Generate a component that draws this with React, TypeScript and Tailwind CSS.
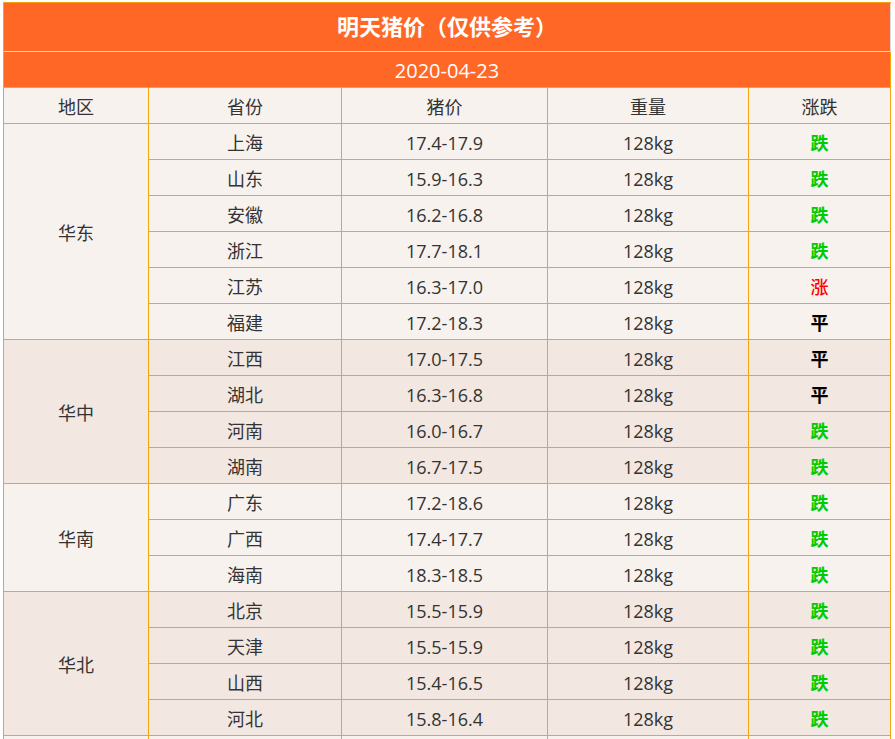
import React from "react";

type Row = { p: string; price: string; t: "跌" | "涨" | "平" };
type Group = { region: string; dark: boolean; rows: Row[] };

const groups: Group[] = [
  {
    region: "华东",
    dark: false,
    rows: [
      { p: "上海", price: "17.4-17.9", t: "跌" },
      { p: "山东", price: "15.9-16.3", t: "跌" },
      { p: "安徽", price: "16.2-16.8", t: "跌" },
      { p: "浙江", price: "17.7-18.1", t: "跌" },
      { p: "江苏", price: "16.3-17.0", t: "涨" },
      { p: "福建", price: "17.2-18.3", t: "平" },
    ],
  },
  {
    region: "华中",
    dark: true,
    rows: [
      { p: "江西", price: "17.0-17.5", t: "平" },
      { p: "湖北", price: "16.3-16.8", t: "平" },
      { p: "河南", price: "16.0-16.7", t: "跌" },
      { p: "湖南", price: "16.7-17.5", t: "跌" },
    ],
  },
  {
    region: "华南",
    dark: false,
    rows: [
      { p: "广东", price: "17.2-18.6", t: "跌" },
      { p: "广西", price: "17.4-17.7", t: "跌" },
      { p: "海南", price: "18.3-18.5", t: "跌" },
    ],
  },
  {
    region: "华北",
    dark: true,
    rows: [
      { p: "北京", price: "15.5-15.9", t: "跌" },
      { p: "天津", price: "15.5-15.9", t: "跌" },
      { p: "山西", price: "15.4-16.5", t: "跌" },
      { p: "河北", price: "15.8-16.4", t: "跌" },
    ],
  },
];

const spanClass: Record<number, string> = {
  3: "row-span-3",
  4: "row-span-4",
  6: "row-span-6",
};

const cell =
  "flex items-center justify-center border-b border-r border-[#f6a50f] pt-[4px]";

function Trend({ t }: { t: Row["t"] }) {
  if (t === "跌") return <span className="font-bold text-[#00cc00]">跌</span>;
  if (t === "涨") return <span className="font-medium text-[#ff0000]">涨</span>;
  return <span className="font-bold text-black">平</span>;
}

export default function App() {
  return (
    <div
      className="min-h-screen bg-white pt-[2px] pl-[3px] text-[18px] text-[#333]"
      style={{ fontFamily: '"Open Sans", "Noto Sans CJK SC", sans-serif' }}
    >
      <div className="w-[888px] border-t border-l border-[#f6a50f]">
        <div className="flex h-[49px] items-center justify-center border-b border-r border-b-[#f3d6c4] border-r-[#d9d9d9] bg-[#ff6727] pb-[1px] text-[22px] font-bold text-white">
          明天猪价（仅供参考）
        </div>
        <div className="flex h-[36px] items-center justify-center border-b border-r border-[#f6a50f] bg-[#ff6727] pt-[2px] text-[20px] text-white">
          2020-04-23
        </div>
        <div className="grid grid-cols-[145px_193px_206px_201px_142px] auto-rows-[36px]">
          {["地区", "省份", "猪价", "重量", "涨跌"].map((h) => (
            <div key={h} className={`${cell} bg-[#f7f2ee]`}>
              {h}
            </div>
          ))}
          {groups.map((g) => {
            const bg = g.dark ? "bg-[#f2e7e1]" : "bg-[#f7f2ee]";
            return (
              <React.Fragment key={g.region}>
                <div className={`${cell} ${bg} ${spanClass[g.rows.length]}`}>
                  {g.region}
                </div>
                {g.rows.map((r) => (
                  <React.Fragment key={r.p}>
                    <div className={`${cell} ${bg}`}>{r.p}</div>
                    <div className={`${cell} ${bg}`}>{r.price}</div>
                    <div className={`${cell} ${bg}`}>128kg</div>
                    <div className={`${cell} ${bg}`}>
                      <Trend t={r.t} />
                    </div>
                  </React.Fragment>
                ))}
              </React.Fragment>
            );
          })}
          {[0, 1, 2, 3, 4].map((i) => (
            <div key={i} className={`${cell} bg-[#f7f2ee]`} />
          ))}
        </div>
      </div>
    </div>
  );
}
